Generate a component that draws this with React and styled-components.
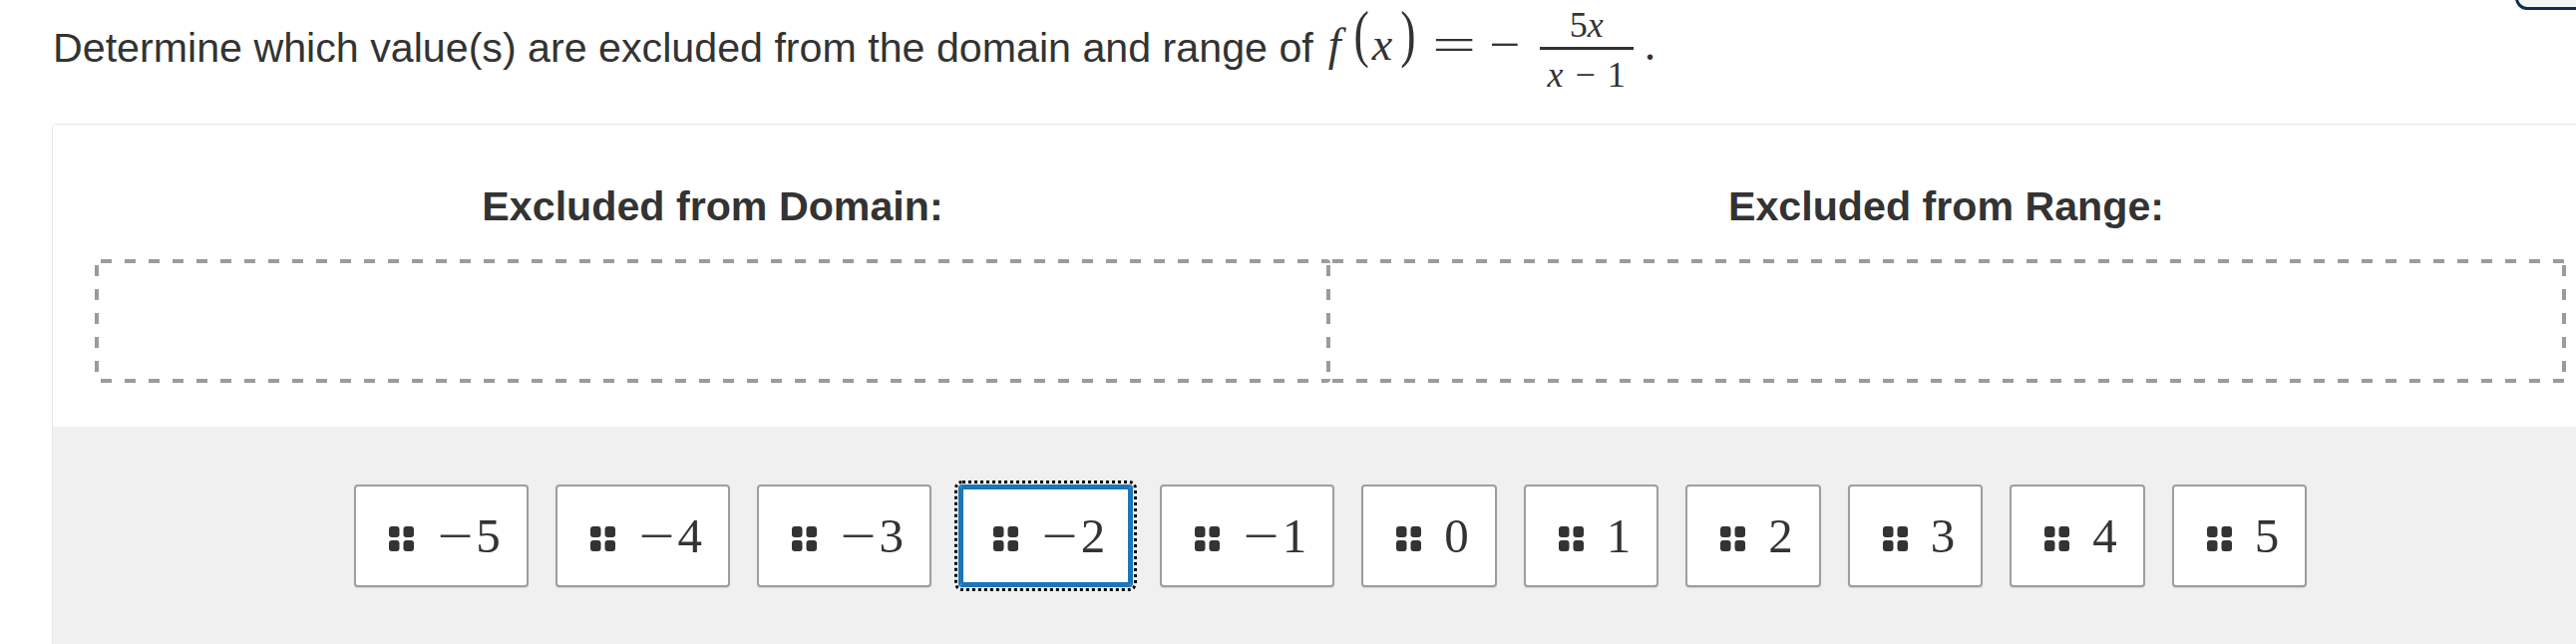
import React from "react";
import styled, { createGlobalStyle } from "styled-components";

const GlobalStyle = createGlobalStyle`
  html, body {
    margin: 0;
    padding: 0;
    background: #fff;
    overflow: hidden;
  }
  body {
    font-family: "Liberation Sans", Arial, Helvetica, sans-serif;
    color: #333;
  }
`;

const values = [-5, -4, -3, -2, -1, 0, 1, 2, 3, 4, 5];

const dash = "#9b9b9b";

const Page = styled.div`
  padding-left: 52px;
  width: 2620px;
`;

const Question = styled.div`
  display: flex;
  align-items: flex-start;
  height: 96px;
  white-space: nowrap;
`;

const Prompt = styled.span`
  font-size: 41.2px;
  line-height: normal;
  margin-top: 25px;
  padding-left: 1px;
`;

const MathItem = styled.span`
  font-family: "Liberation Serif", "Times New Roman", serif;
  font-size: 46px;
  font-style: ${(p) => (p.$italic ? "italic" : "normal")};
  line-height: 1;
  margin-top: 22px;
  margin-left: ${(p) => p.$ml || 0}px;
  display: inline-block;
  transform: ${(p) => p.$transform || "none"};
`;

const Fraction = styled.span`
  display: inline-flex;
  flex-direction: column;
  align-items: center;
  margin-top: 7px;
  margin-left: ${(p) => p.$ml || 0}px;
  font-family: "Liberation Serif", "Times New Roman", serif;
  font-size: 36px;
  line-height: 36px;
`;

const Numerator = styled.span`
  padding: 0 8px 4px;
`;

const Bar = styled.span`
  align-self: stretch;
  height: 2.5px;
  background: #333;
`;

const Denominator = styled.span`
  padding: 7.5px 8px 0;
`;

const Op = styled.span`
  margin: 0 ${(p) => p.$gap || 0}px;
`;

const Panel = styled.div`
  width: 2562px;
  margin-top: 28px;
  border: 1px solid #e6e6e6;
  border-radius: 4px;
  overflow: hidden;
`;

const DropArea = styled.div`
  display: grid;
  grid-template-columns: 1fr 1fr;
  padding: 59px 42px 44px;
  background: #fff;
`;

const Column = styled.div`
  display: flex;
  flex-direction: column;
  align-items: stretch;
  margin-left: ${(p) => (p.$joined ? "-4px" : "0")};
`;

const Heading = styled.div`
  font-size: 41.2px;
  font-weight: bold;
  text-align: center;
  line-height: 47px;
  margin-bottom: 29px;
`;

const DropBox = styled.div`
  height: 124px;
  border-radius: 4px;
  background:
    repeating-linear-gradient(90deg, ${dash} 0 11px, transparent 11px 24px) 6px 0 / calc(100% - 6px) 4px no-repeat,
    repeating-linear-gradient(90deg, ${dash} 0 11px, transparent 11px 24px) 6px 100% / calc(100% - 6px) 4px no-repeat,
    repeating-linear-gradient(180deg, ${dash} 0 11px, transparent 11px 24px) 0 6px / 4px calc(100% - 6px) no-repeat,
    repeating-linear-gradient(180deg, ${dash} 0 11px, transparent 11px 24px) 100% 6px / 4px calc(100% - 6px) no-repeat;
`;

const Tray = styled.div`
  display: flex;
  justify-content: center;
  gap: 27px;
  padding: 58px 0 70px;
  background: #f0f0f0;
`;

const Tile = styled.div`
  display: flex;
  align-items: center;
  height: 99px;
  padding: 0 26px 0 33px;
  background: #fff;
  border: 2px solid ${(p) => (p.$focused ? "#1b75b9" : "#9e9e9e")};
  border-radius: 4px;
  box-shadow: ${(p) =>
    p.$focused ? "inset 0 0 0 3px #1b75b9" : "0 1px 1px rgba(0,0,0,0.12)"};
  outline: ${(p) => (p.$focused ? "3px dotted #000" : "none")};
  outline-offset: 1px;
`;

const Grip = styled.svg`
  width: 26px;
  height: 26px;
  margin-top: 6px;
  margin-right: 22px;
  flex: none;
`;

const Number = styled.span`
  font-family: "Liberation Serif", "Times New Roman", serif;
  font-size: 49px;
  line-height: 1;
  color: #333;
  display: flex;
  align-items: baseline;
`;

const Minus = styled.span`
  display: inline-block;
  margin: 0 7px 0 5px;
  transform: scaleX(1.3);
`;

const CornerButton = styled.div`
  position: absolute;
  top: -40px;
  left: 2522px;
  width: 120px;
  height: 44px;
  border: 3px solid #0c2a55;
  border-radius: 12px;
  background: #f4f4f4;
`;

function GripIcon() {
  return (
    <Grip viewBox="0 0 26 26">
      <rect x="0" y="0" width="10.5" height="11" rx="3" fill="#333" />
      <rect x="14.5" y="0" width="10.5" height="11" rx="3" fill="#333" />
      <rect x="0" y="14" width="10.5" height="11" rx="3" fill="#333" />
      <rect x="14.5" y="14" width="10.5" height="11" rx="3" fill="#333" />
    </Grip>
  );
}

export default function App() {
  return (
    <>
      <GlobalStyle />
      <CornerButton />
      <Page>
        <Question>
          <Prompt>Determine which value(s) are excluded from the domain and range of</Prompt>
          <MathItem $italic $ml={15}>f</MathItem>
          <MathItem $ml={13} $transform="translateY(-11px) scaleY(1.4)">(</MathItem>
          <MathItem $italic $ml={3}>x</MathItem>
          <MathItem $ml={8} $transform="translateY(-11px) scaleY(1.4)">)</MathItem>
          <MathItem $ml={25} $transform="scaleX(1.7)">=</MathItem>
          <MathItem $ml={25} $transform="scaleX(1.2)">−</MathItem>
          <Fraction $ml={22}>
            <Numerator>
              5<i>x</i>
            </Numerator>
            <Bar />
            <Denominator>
              <i>x</i>
              <Op $gap={12}>−</Op>1
            </Denominator>
          </Fraction>
          <MathItem $ml={11}>.</MathItem>
        </Question>

        <Panel>
          <DropArea>
            <Column>
              <Heading>Excluded from Domain:</Heading>
              <DropBox />
            </Column>
            <Column $joined>
              <Heading>Excluded from Range:</Heading>
              <DropBox />
            </Column>
          </DropArea>
          <Tray>
            {values.map((v) => (
              <Tile key={v} $focused={v === -2}>
                <GripIcon />
                <Number>
                  {v < 0 && <Minus>−</Minus>}
                  {Math.abs(v)}
                </Number>
              </Tile>
            ))}
          </Tray>
        </Panel>
      </Page>
    </>
  );
}
